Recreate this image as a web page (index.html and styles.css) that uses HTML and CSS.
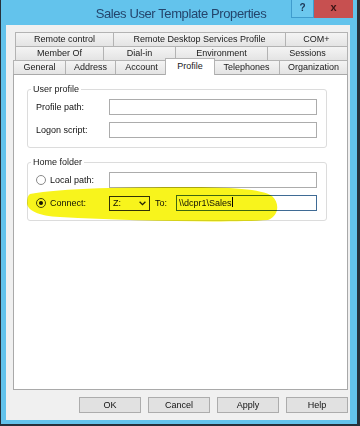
FILE: index.html
```html
<!DOCTYPE html>
<html>
<head>
<meta charset="utf-8">
<link rel="stylesheet" href="styles.css">
</head>
<body>
<div class="window">
  <div class="titlebar">
    <div class="title">Sales User Template Properties</div>
    <div class="caption">
      <div class="btn-help">?</div>
      <div class="btn-close">x</div>
    </div>
  </div>
  <div class="client">
    <div class="tabs">
      <div class="tab-row row-back">
        <div class="tab w98">Remote control</div>
        <div class="tab w172">Remote Desktop Services Profile</div>
        <div class="tab w63">COM+</div>
      </div>
      <div class="tab-row row-back">
        <div class="tab w88">Member Of</div>
        <div class="tab w72">Dial-in</div>
        <div class="tab w92">Environment</div>
        <div class="tab w81">Sessions</div>
      </div>
      <div class="tab-row row-front">
        <div class="tab w52">General</div>
        <div class="tab w50">Address</div>
        <div class="tab w52">Account</div>
        <div class="tab active">Profile</div>
        <div class="tab w66">Telephones</div>
        <div class="tab w69">Organization</div>
      </div>
    </div>
    <div class="panel">
      <fieldset class="group">
        <legend>User profile</legend>
        <div class="rows">
          <div class="row"><span>Profile path:</span><div class="input"></div></div>
          <div class="row"><span>Logon script:</span><div class="input"></div></div>
        </div>
      </fieldset>
      <fieldset class="group">
        <legend>Home folder</legend>
        <div class="rows">
          <div class="row">
            <label class="radio"><span class="radio-dot"></span>Local path:</label>
            <div class="input"></div>
          </div>
          <div class="row">
            <label class="radio checked"><span class="radio-dot"></span>Connect:</label>
            <div class="connect">
              <div class="select"><span>Z:</span><svg class="chev" width="7" height="5" viewBox="0 0 7 5"><polyline points="0.6,0.8 3.5,3.7 6.4,0.8" fill="none" stroke="#222" stroke-width="1.3"/></svg></div>
              <span class="to">To:</span>
              <div class="input path">\\dcpr1\Sales<span class="caret"></span></div>
            </div>
          </div>
        </div>
      </fieldset>
    </div>
    <div class="buttons">
      <button class="btn">OK</button>
      <button class="btn">Cancel</button>
      <button class="btn">Apply</button>
      <button class="btn">Help</button>
    </div>
  </div>
</div>
<svg class="highlight" width="360" height="426" viewBox="0 0 360 426">
  <path d="M30 194 C60 188 130 187 185 187 C230 187 262 189 272 196 C280 203 279 216 268 220 C230 223 130 221 60 217 C38 216 27 210 27 203 C27 198 28 195 30 194 Z" fill="#f8f41c"/>
</svg>
</body>
</html>
```

FILE: styles.css
```css
body {
  margin: 0;
  width: 360px;
  height: 426px;
  overflow: hidden;
  position: relative;
  background: #26313b;
  font-family: "Liberation Sans", Arial, sans-serif;
  font-size: 9px;
  color: #111;
}

.window {
  margin-left: 1px;
  width: 356px;
  height: 424px;
  background: #63c3ec;
  display: flex;
  flex-direction: column;
}

.titlebar {
  height: 25px;
  display: grid;
}

.title,
.caption {
  grid-area: 1 / 1;
}

.title {
  text-align: center;
  padding-left: 4px;
  font-size: 13px;
  letter-spacing: -0.4px;
  line-height: 27px;
  color: #24456c;
}

.caption {
  justify-self: end;
  align-self: start;
  display: flex;
  margin-right: 4px;
}

.btn-help {
  width: 23px;
  height: 18px;
  box-sizing: border-box;
  border: 1px solid #3f9ccd;
  border-top: none;
  background: #6cc8ee;
  color: #1b3553;
  font-weight: bold;
  font-size: 10px;
  line-height: 16px;
  text-align: center;
}

.btn-close {
  width: 39px;
  height: 18px;
  background: #c75050;
  color: #3a1414;
  font-weight: bold;
  font-size: 11px;
  line-height: 15px;
  text-align: center;
}

.client {
  margin: 0 7px 0 5px;
  height: 395px;
  background: #f0f0f0;
  display: flex;
  flex-direction: column;
}

.tabs {
  margin-top: 7px;
}

.tab-row {
  display: flex;
  height: 14px;
}

.row-back {
  margin-left: 9px;
}

.row-front {
  margin-left: 7px;
}

.tab {
  box-sizing: border-box;
  height: 14px;
  border-top: 1px solid #b3b3b3;
  border-left: 1px solid #b3b3b3;
  background: linear-gradient(#f4f4f4, #e4e4e4);
  text-align: center;
  line-height: 13px;
  white-space: nowrap;
  color: #1a1a1a;
}

.tab:last-child {
  border-right: 1px solid #b3b3b3;
}

.tab.active {
  position: relative;
  z-index: 1;
  width: 50px;
  height: 17px;
  margin: -2px -2px 0 -2px;
  border-right: 1px solid #b3b3b3;
  background: #fff;
  line-height: 15px;
}

.w98 { width: 98px; }
.w172 { width: 172px; }
.w63 { width: 63px; }
.w88 { width: 88px; }
.w72 { width: 72px; }
.w92 { width: 92px; }
.w81 { width: 81px; }
.w52 { width: 52px; }
.w50 { width: 50px; }
.w66 { width: 66px; }
.w69 { width: 69px; }

.panel {
  margin-left: 7px;
  width: 335px;
  height: 316px;
  box-sizing: border-box;
  border: 1px solid #a9a9a9;
  background: #fff;
  display: flex;
  flex-direction: column;
}

.group {
  margin: 8px 20px 0 13px;
  padding: 4px 9px 9px 8px;
  border: 1px solid #dcdcdc;
  border-radius: 3px;
}

.group legend {
  margin-left: -5px;
  padding: 0 2px;
  line-height: 12px;
  font-size: 9px;
  color: #1a1a1a;
}

.rows {
  display: grid;
  row-gap: 7px;
}

.row {
  display: grid;
  grid-template-columns: 73px 1fr;
  height: 16px;
  align-items: center;
}

.input {
  height: 16px;
  box-sizing: border-box;
  border: 1px solid #acacac;
  background: #fff;
}

.radio {
  display: flex;
  align-items: center;
  gap: 4px;
}

.radio-dot {
  width: 10px;
  height: 10px;
  box-sizing: border-box;
  border-radius: 50%;
  border: 1px solid #8a8a8a;
  background: #fff;
  display: grid;
  place-items: center;
}

.checked .radio-dot {
  border-color: #444;
}

.checked .radio-dot::after {
  content: "";
  width: 4px;
  height: 4px;
  border-radius: 50%;
  background: #111;
}

.connect {
  display: flex;
  align-items: center;
  height: 16px;
}

.select {
  width: 41px;
  height: 15px;
  box-sizing: border-box;
  border: 1px solid #333;
  background: #fff;
  display: flex;
  align-items: center;
  justify-content: space-between;
  padding: 0 3px 0 3px;
}

.to {
  margin-left: 5px;
  width: 21px;
}

.path {
  flex: 1;
  border-color: #3f6b95;
  padding-left: 2px;
  line-height: 14px;
}

.caret {
  display: inline-block;
  width: 1px;
  height: 10px;
  background: #000;
  vertical-align: -1px;
}

.buttons {
  display: flex;
  justify-content: flex-end;
  gap: 7px;
  margin-top: 7px;
  padding-right: 2px;
}

.btn {
  width: 62px;
  height: 16px;
  box-sizing: border-box;
  border: 1px solid #acacac;
  background: #e1e1e1;
  font-family: "Liberation Sans", Arial, sans-serif;
  font-size: 9px;
  line-height: 14px;
  color: #111;
  padding: 0;
  text-align: center;
}

.highlight {
  position: absolute;
  left: 0;
  top: 0;
  pointer-events: none;
  mix-blend-mode: multiply;
}
```
